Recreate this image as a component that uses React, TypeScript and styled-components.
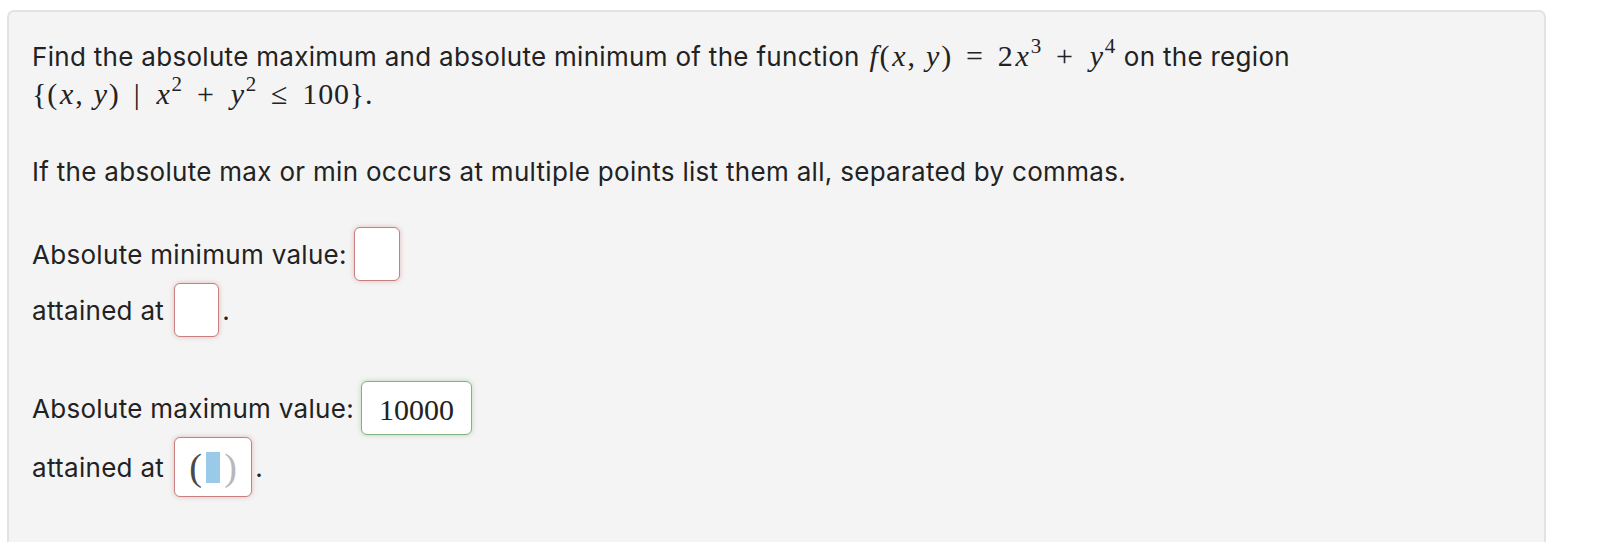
import React from "react";
import styled, { createGlobalStyle } from "styled-components";

const GlobalStyle = createGlobalStyle`
  html, body {
    margin: 0;
    padding: 0;
    background: #ffffff;
  }
  body {
    font-family: Inter, "Noto Sans", "Liberation Sans", sans-serif;
    color: #222222;
  }
`;

const Page = styled.div`
  padding: 10px 52px 0 7px;
  height: 542px;
  box-sizing: border-box;
  overflow: hidden;
`;

const Panel = styled.div`
  background: #f4f4f4;
  border: 2px solid #e3e3e3;
  border-radius: 7px;
  padding: 26px 23px 60px 23px;
  min-height: 580px;
  box-sizing: border-box;
`;

const Para = styled.p<{ $gap: number }>`
  margin: 0 0 ${(p) => p.$gap}px 0;
  font-size: 26px;
  line-height: 38px;
  letter-spacing: 0.3px;
`;

const Line = styled.div<{ $h: number }>`
  display: flex;
  align-items: center;
  height: ${(p) => p.$h}px;
  font-size: 26px;
  letter-spacing: 0.3px;
`;

const Spacer = styled.div<{ $h: number }>`
  height: ${(p) => p.$h}px;
`;

const Math = styled.span`
  font-family: "Liberation Serif", "DejaVu Serif", serif;
  font-size: 30px;
  line-height: 1;
  letter-spacing: 0.8px;
  white-space: nowrap;
`;

const V = styled.i`
  font-style: italic;
  margin: 0 1px 0 2px;
`;

const Sup = styled.sup`
  font-size: 21px;
  vertical-align: 13px;
  line-height: 0;
`;

const Op = styled.span`
  padding: 0 14px;
`;

const Box = styled.span<{
  $tone: "bad" | "good";
  $w: number;
  $h: number;
  $gap?: number;
}>`
  display: inline-flex;
  align-items: center;
  justify-content: center;
  box-sizing: border-box;
  flex: none;
  width: ${(p) => p.$w}px;
  height: ${(p) => p.$h}px;
  margin-left: ${(p) => p.$gap ?? 7}px;
  background: #ffffff;
  border-radius: 6px;
  border: 1.5px solid ${(p) => (p.$tone === "good" ? "#82b282" : "#c77f7f")};
  box-shadow: 0 0 5px
    ${(p) =>
      p.$tone === "good" ? "rgba(110, 175, 110, 0.45)" : "rgba(205, 115, 115, 0.45)"};
`;

const Answer = styled.span`
  font-family: "Liberation Serif", "DejaVu Serif", serif;
  font-size: 30px;
  letter-spacing: 0;
  color: #222;
  margin-top: 3px;
`;

const Paren = styled.span<{ $light?: boolean }>`
  font-family: "Liberation Serif", "DejaVu Serif", serif;
  font-size: 38px;
  line-height: 1;
  color: ${(p) => (p.$light ? "#b8b8b8" : "#4a4a4a")};
`;

const Slot = styled.span`
  display: inline-block;
  width: 14px;
  height: 31px;
  margin: 0 4px;
  background: #99cbe9;
`;

const Dot = styled.span`
  margin-left: 3px;
`;

export default function App() {
  return (
    <>
      <GlobalStyle />
      <Page>
        <Panel>
          <Para $gap={39}>
            Find the absolute maximum and absolute minimum of the function{" "}
            <Math>
              <V>f</V>(<V>x</V>, <V>y</V>)<Op>=</Op>2<V>x</V>
              <Sup>3</Sup>
              <Op>+</Op>
              <V>y</V>
              <Sup>4</Sup>
            </Math>{" "}
            on the region
            <br />
            <Math>
              {"{"}(<V>x</V>, <V>y</V>)<Op>|</Op>
              <V>x</V>
              <Sup>2</Sup>
              <Op>+</Op>
              <V>y</V>
              <Sup>2</Sup>
              <Op>≤</Op>100{"}"}.
            </Math>
          </Para>
          <Para $gap={35}>
            If the absolute max or min occurs at multiple points list them all,
            separated by commas.
          </Para>

          <Line $h={56}>
            Absolute minimum value:
            <Box $tone="bad" $w={46} $h={54} />
          </Line>
          <Line $h={56}>
            attained at
            <Box $tone="bad" $w={45} $h={54} $gap={10} />
            <Dot>.</Dot>
          </Line>

          <Spacer $h={42} />

          <Line $h={56}>
            Absolute maximum value:
            <Box $tone="good" $w={111} $h={54}>
              <Answer>10000</Answer>
            </Box>
          </Line>
          <Line $h={62}>
            attained at
            <Box $tone="bad" $w={78} $h={60} $gap={10}>
              <Paren>(</Paren>
              <Slot />
              <Paren $light>)</Paren>
            </Box>
            <Dot>.</Dot>
          </Line>
        </Panel>
      </Page>
    </>
  );
}
